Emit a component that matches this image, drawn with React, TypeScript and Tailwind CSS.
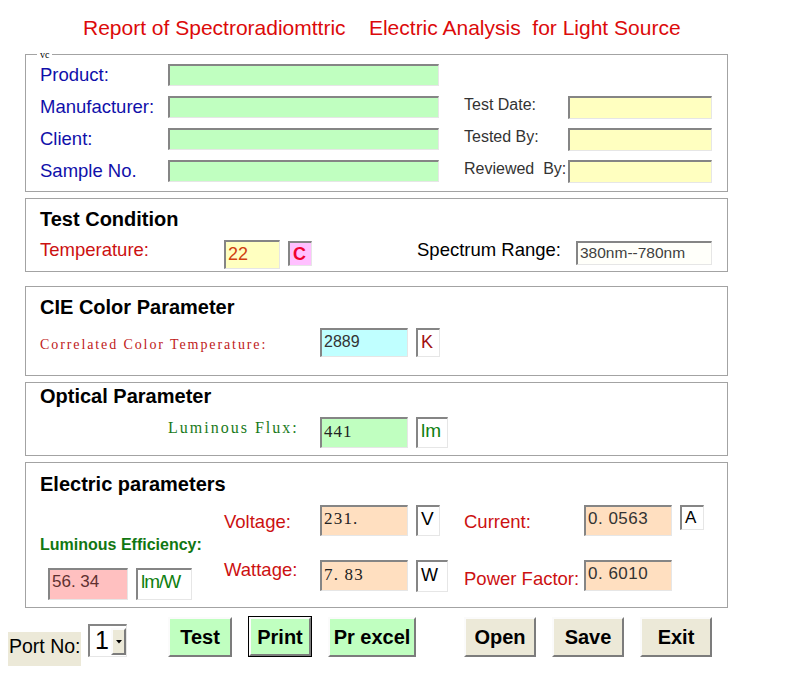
import React from "react";

const inset =
  "border-t-2 border-l-2 border-b border-r border-t-[#858585] border-l-[#858585] border-b-[#e6e6e6] border-r-[#e6e6e6]";

const raised =
  "border-2 border-t-[#fbfbfb] border-l-[#fbfbfb] border-b-[#7c7c7c] border-r-[#7c7c7c]";

// Sunken text box, the way the old form draws it
function Field({
  className = "",
  children,
}: {
  className?: string;
  children?: React.ReactNode;
}) {
  return (
    <div className={`${inset} flex items-start pl-[2px] overflow-hidden ${className}`}>
      {children}
    </div>
  );
}

function Panel({
  className = "",
  children,
}: {
  className?: string;
  children: React.ReactNode;
}) {
  return (
    <div className={`relative ml-[25px] w-[703px] border border-[#a3a3a3] pl-[14px] ${className}`}>
      {children}
    </div>
  );
}

function PanelTitle({ children }: { children: React.ReactNode }) {
  return <div className="h-[24px] text-[20px] font-bold leading-[24px] text-black">{children}</div>;
}

function Button({
  label,
  className = "",
  framed = false,
}: {
  label: string;
  className?: string;
  framed?: boolean;
}) {
  if (framed) {
    return (
      <div className={`border border-black ${className}`}>
        <div className={`${raised} flex h-full w-full items-center justify-center bg-[#c0ffc0] text-[20px] font-bold`}>
          {label}
        </div>
      </div>
    );
  }
  return (
    <div className={`${raised} flex items-center justify-center text-[20px] font-bold ${className}`}>
      {label}
    </div>
  );
}

export default function App() {
  const serif = "font-['Liberation_Serif',serif]";

  return (
    <div className="h-[686px] w-[794px] overflow-hidden bg-white font-['Liberation_Sans',Arial,sans-serif] text-black">
      {/* Title */}
      <div className="whitespace-pre pl-[83px] pt-[16px] text-[21px] leading-[24px] text-[#dc0a0a]">
        Report of Spectroradiomttric    Electric Analysis  for Light Source
      </div>

      {/* Product information */}
      <Panel className="mt-[14px] h-[138px] pt-[4px]">
        <span className={`absolute left-[11px] top-[-5px] bg-white px-[3px] text-[10px] leading-[10px] ${serif}`}>vc</span>
        <div className="flex h-[32px] items-center">
          <div className="w-[128px] text-[18.5px] text-[#1010aa]">Product:</div>
          <Field className="h-[22px] w-[271px] bg-[#c0ffc0]" />
        </div>
        <div className="flex h-[32px] items-center">
          <div className="w-[128px] whitespace-nowrap text-[18.5px] text-[#1010aa]">Manufacturer:</div>
          <Field className="h-[22px] w-[271px] bg-[#c0ffc0]" />
          <div className="mb-[5px] ml-[25px] w-[104px] text-[16px] text-[#333]">Test Date:</div>
          <Field className="h-[23px] w-[144px] bg-[#ffffc0]" />
        </div>
        <div className="flex h-[32px] items-center">
          <div className="w-[128px] text-[18.5px] text-[#1010aa]">Client:</div>
          <Field className="h-[22px] w-[271px] bg-[#c0ffc0]" />
          <div className="mb-[5px] ml-[25px] w-[104px] text-[16px] text-[#333]">Tested By:</div>
          <Field className="h-[23px] w-[144px] bg-[#ffffc0]" />
        </div>
        <div className="flex h-[32px] items-center">
          <div className="w-[128px] text-[18.5px] text-[#1010aa]">Sample No.</div>
          <Field className="h-[22px] w-[271px] bg-[#c0ffc0]" />
          <div className="mb-[5px] ml-[25px] w-[104px] whitespace-pre text-[16px] text-[#333]">Reviewed  By:</div>
          <Field className="h-[23px] w-[144px] bg-[#ffffc0]" />
        </div>
      </Panel>

      {/* Test condition */}
      <Panel className="mt-[6px] h-[74px] pt-[8px]">
        <PanelTitle>Test Condition</PanelTitle>
        <div className="mt-[9px] flex items-start">
          <div className="w-[184px] text-[18.5px] leading-[20px] text-[#cc1111]">Temperature:</div>
          <Field className="h-[29px] w-[56px] bg-[#ffffc0]">
            <span className="pt-[2px] text-[18px] leading-[20px] text-[#d04010]">22</span>
          </Field>
          <Field className="ml-[8px] mt-[1px] h-[25px] w-[24px] bg-[#ffc0ff]">
            <span className="pl-[1px] pt-[1px] text-[18px] font-bold leading-[20px] text-[#f00030]">C</span>
          </Field>
          <div className="ml-[105px] w-[159px] text-[18.5px] leading-[20px]">Spectrum Range:</div>
          <Field className="mt-[1px] h-[24px] w-[136px] bg-[#fffffa]">
            <span className="pt-[1px] text-[15.5px] leading-[18px] text-[#404040]">380nm--780nm</span>
          </Field>
        </div>
      </Panel>

      {/* CIE colour */}
      <Panel className="mt-[14px] h-[90px] pt-[8px]">
        <PanelTitle>CIE Color Parameter</PanelTitle>
        <div className="mt-[9px] flex items-start">
          <div className={`mt-[7px] w-[280px] whitespace-pre text-[14px] leading-[20px] tracking-[1.9px] text-[#c02020] ${serif}`}>
            Correlated Color Temperature:
          </div>
          <Field className="h-[29px] w-[88px] bg-[#c0ffff]">
            <span className="pt-[2px] text-[16px] leading-[20px] text-[#333]">2889</span>
          </Field>
          <Field className="ml-[8px] h-[29px] w-[24px] bg-white">
            <span className="pl-[1px] pt-[2px] text-[18px] leading-[20px] text-[#a01010]">K</span>
          </Field>
        </div>
      </Panel>

      {/* Optical */}
      <Panel className="mt-[6px] h-[74px] pt-[1px]">
        <PanelTitle>Optical Parameter</PanelTitle>
        <div className="mt-[9px] flex items-start">
          <div className={`ml-[128px] mt-[1px] w-[152px] whitespace-pre text-[16px] leading-[20px] tracking-[2px] text-[#1a7a1a] ${serif}`}>
            Luminous Flux:
          </div>
          <Field className="h-[31px] w-[88px] bg-[#c0ffc0]">
            <span className={`pt-[3px] text-[17px] leading-[20px] tracking-[1px] text-[#222] ${serif}`}>441</span>
          </Field>
          <Field className="ml-[8px] h-[31px] w-[32px] bg-white">
            <span className="pl-[1px] pt-[2px] text-[19px] leading-[20px] text-[#108010]">lm</span>
          </Field>
        </div>
      </Panel>

      {/* Electric */}
      <Panel className="mt-[6px] h-[146px] pt-[9px]">
        <PanelTitle>Electric parameters</PanelTitle>
        <div className="mt-[9px] flex items-start">
          <div className="w-[184px]">
            <div className="mt-[30px] whitespace-nowrap text-[16px] font-bold leading-[20px] text-[#117711]">
              Luminous Efficiency:
            </div>
            <div className="ml-[8px] mt-[13px] flex">
              <Field className="h-[32px] w-[80px] bg-[#ffc0c0]">
                <span className="pt-[2px] text-[17px] leading-[20px] text-[#603030]">56. 34</span>
              </Field>
              <Field className="ml-[8px] h-[32px] w-[56px] bg-white">
                <span className="pl-[1px] pt-[2px] text-[19px] leading-[20px] tracking-[-1px] text-[#108010]">lm/W</span>
              </Field>
            </div>
          </div>

          <div className="w-[240px]">
            <div className="flex items-start">
              <div className="mt-[7px] w-[96px] text-[18.5px] leading-[20px] text-[#cc1111]">Voltage:</div>
              <Field className="h-[31px] w-[88px] bg-[#ffdfc0]">
                <span className={`pt-[2px] text-[17px] leading-[20px] tracking-[1.2px] text-[#222] ${serif}`}>231.</span>
              </Field>
              <Field className="ml-[8px] h-[31px] w-[24px] bg-white">
                <span className="pl-[1px] pt-[2px] text-[19px] leading-[20px]">V</span>
              </Field>
            </div>
            <div className="mt-[24px] flex items-start">
              <div className="w-[96px] text-[18.5px] leading-[20px] text-[#cc1111]">Wattage:</div>
              <Field className="h-[31px] w-[88px] bg-[#ffdfc0]">
                <span className={`whitespace-pre pt-[3px] text-[17px] leading-[20px] tracking-[1.2px] text-[#222] ${serif}`}>7. 83</span>
              </Field>
              <Field className="ml-[8px] h-[32px] w-[32px] bg-white">
                <span className="pl-[1px] pt-[3px] text-[18px] leading-[20px]">W</span>
              </Field>
            </div>
          </div>

          <div>
            <div className="flex items-start">
              <div className="mt-[7px] w-[120px] text-[18.5px] leading-[20px] text-[#cc1111]">Current:</div>
              <Field className="h-[31px] w-[88px] bg-[#ffdfc0]">
                <span className="pt-[2px] text-[17px] leading-[20px] tracking-[0.5px] text-[#333]">0. 0563</span>
              </Field>
              <Field className="ml-[8px] h-[25px] w-[24px] bg-white">
                <span className="pl-[1px] pt-[1px] text-[17px] leading-[20px]">A</span>
              </Field>
            </div>
            <div className="mt-[24px] flex items-start">
              <div className="mt-[9px] w-[120px] whitespace-nowrap text-[18.5px] leading-[20px] text-[#cc1111]">
                Power Factor:
              </div>
              <Field className="h-[31px] w-[88px] bg-[#ffdfc0]">
                <span className="pt-[2px] text-[17px] leading-[20px] tracking-[0.5px] text-[#333]">0. 6010</span>
              </Field>
            </div>
          </div>
        </div>
      </Panel>

      {/* Bottom bar */}
      <div className="flex items-start">
        <div className="ml-[8px] mt-[24px] h-[34px] w-[73px] whitespace-nowrap bg-[#ece9d8] pl-[1px] pt-[2px] text-[19.5px] leading-[24px]">
          Port No:
        </div>
        <div className={`${inset} ml-[7px] mt-[16px] flex h-[33px] w-[39px] bg-white`}>
          <span className="w-[21px] pl-[5px] text-[25px] leading-[28px]">1</span>
          <div className={`${raised} mt-[2px] flex h-[27px] w-[15px] items-center justify-center bg-[#ece9d8]`}>
            <svg width="6" height="4" viewBox="0 0 6 4">
              <path d="M0 0 H6 L3 3.5 Z" fill="#000" />
            </svg>
          </div>
        </div>
        <Button label="Test" className="ml-[41px] mt-[9px] h-[40px] w-[64px] bg-[#c0ffc0]" />
        <Button label="Print" framed className="ml-[16px] mt-[8px] h-[41px] w-[64px]" />
        <Button label="Pr excel" className="ml-[16px] mt-[9px] h-[40px] w-[88px] bg-[#c0ffc0]" />
        <Button label="Open" className="ml-[48px] mt-[9px] h-[40px] w-[72px] bg-[#ece9d8]" />
        <Button label="Save" className="ml-[16px] mt-[9px] h-[40px] w-[72px] bg-[#ece9d8]" />
        <Button label="Exit" className="ml-[16px] mt-[9px] h-[40px] w-[72px] bg-[#ece9d8]" />
      </div>
    </div>
  );
}
